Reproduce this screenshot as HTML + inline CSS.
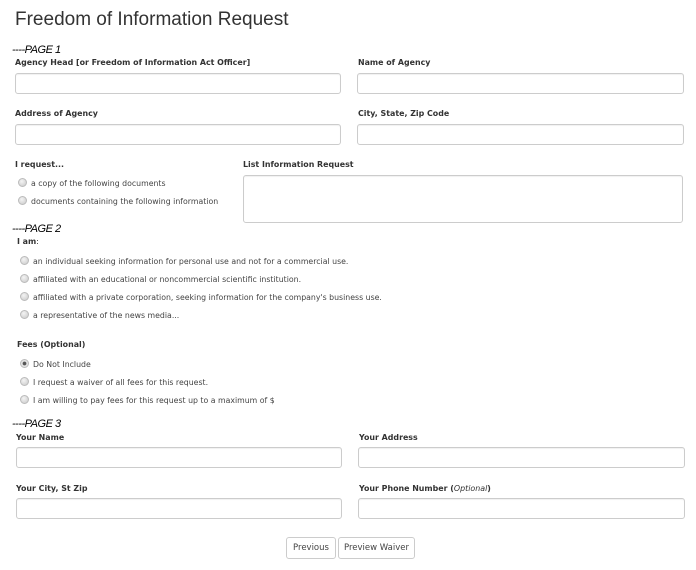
<!DOCTYPE html>
<html><head><style>
body{margin:0;width:696px;height:570px;background:#fff;position:relative;font-family:"DejaVu Sans","Liberation Sans",sans-serif;color:#333;overflow:hidden}
.a{position:absolute;white-space:nowrap}
h1{position:absolute;left:15px;top:9px;margin:0;font-family:"Liberation Sans",sans-serif;font-weight:normal;font-size:19px;color:#333}
.pg{font-family:"Liberation Sans",sans-serif;font-style:italic;font-size:11px;color:#000;letter-spacing:-0.5px}
.lb{font-size:7.9px;font-weight:bold;color:#333}
.in{position:absolute;border:1px solid #ccc;border-radius:3px;background:#fff;box-shadow:inset 0 1px 1px rgba(0,0,0,.06)}
.r{position:absolute;width:7px;height:7px;border-radius:50%;background:radial-gradient(circle at 40% 35%,#f4f4f4,#c8c8c8);border:1px solid #bbb}
.t{font-size:7.8px;color:#444}
.btn{position:absolute;border:1px solid #ccc;border-radius:3px;background:#fff;font-size:8.5px;color:#444;text-align:center;line-height:20px;box-sizing:border-box;height:22px}
</style></head><body>
<h1>Freedom of Information Request</h1>
<div class="a pg" style="left:12px;top:44px">----PAGE 1</div>
<div class="a lb" style="left:15px;top:58px">Agency Head [or Freedom of Information Act Officer]</div>
<div class="a lb" style="left:358px;top:58px">Name of Agency</div>
<div class="in" style="left:15px;top:73px;width:324px;height:19px"></div>
<div class="in" style="left:357px;top:73px;width:325px;height:19px"></div>
<div class="a lb" style="left:15px;top:109px">Address of Agency</div>
<div class="a lb" style="left:358px;top:109px">City, State, Zip Code</div>
<div class="in" style="left:15px;top:124px;width:324px;height:19px"></div>
<div class="in" style="left:357px;top:124px;width:325px;height:19px"></div>
<div class="a lb" style="left:15px;top:160px">I request...</div>
<div class="a lb" style="left:243px;top:160px">List Information Request</div>
<div class="in" style="left:243px;top:175px;width:438px;height:46px"></div>
<div class="r" style="left:18px;top:178px"></div><div class="a t" style="left:31px;top:179px">a copy of the following documents</div>
<div class="r" style="left:18px;top:196px"></div><div class="a t" style="left:31px;top:197px">documents containing the following information</div>
<div class="a pg" style="left:12px;top:223px">----PAGE 2</div>
<div class="a lb" style="left:17px;top:237px">I am<span style="font-weight:normal">:</span></div>
<div class="r" style="left:20px;top:256px"></div><div class="a t" style="left:33px;top:257px">an individual seeking information for personal use and not for a commercial use.</div>
<div class="r" style="left:20px;top:274px"></div><div class="a t" style="left:33px;top:275px">affiliated with an educational or noncommercial scientific institution.</div>
<div class="r" style="left:20px;top:292px"></div><div class="a t" style="left:33px;top:293px">affiliated with a private corporation, seeking information for the company's business use.</div>
<div class="r" style="left:20px;top:310px"></div><div class="a t" style="left:33px;top:311px">a representative of the news media...</div>
<div class="a lb" style="left:17px;top:340px">Fees (Optional)</div>
<div class="r" style="left:20px;top:359px;background:radial-gradient(circle,#555 0 1.6px,#e4e4e4 2.2px)"></div><div class="a t" style="left:33px;top:360px">Do Not Include</div>
<div class="r" style="left:20px;top:377px"></div><div class="a t" style="left:33px;top:378px">I request a waiver of all fees for this request.</div>
<div class="r" style="left:20px;top:395px"></div><div class="a t" style="left:33px;top:396px">I am willing to pay fees for this request up to a maximum of $</div>
<div class="a pg" style="left:12px;top:418px">----PAGE 3</div>
<div class="a lb" style="left:16px;top:433px">Your Name</div>
<div class="a lb" style="left:359px;top:433px">Your Address</div>
<div class="in" style="left:16px;top:447px;width:324px;height:19px"></div>
<div class="in" style="left:358px;top:447px;width:325px;height:19px"></div>
<div class="a lb" style="left:16px;top:484px">Your City, St Zip</div>
<div class="a lb" style="left:359px;top:484px">Your Phone Number (<i style="font-weight:normal">Optional</i>)</div>
<div class="in" style="left:16px;top:498px;width:324px;height:19px"></div>
<div class="in" style="left:358px;top:498px;width:325px;height:19px"></div>
<div class="btn" style="left:286px;top:537px;width:50px">Previous</div>
<div class="btn" style="left:338px;top:537px;width:77px">Preview Waiver</div>
</body></html>
